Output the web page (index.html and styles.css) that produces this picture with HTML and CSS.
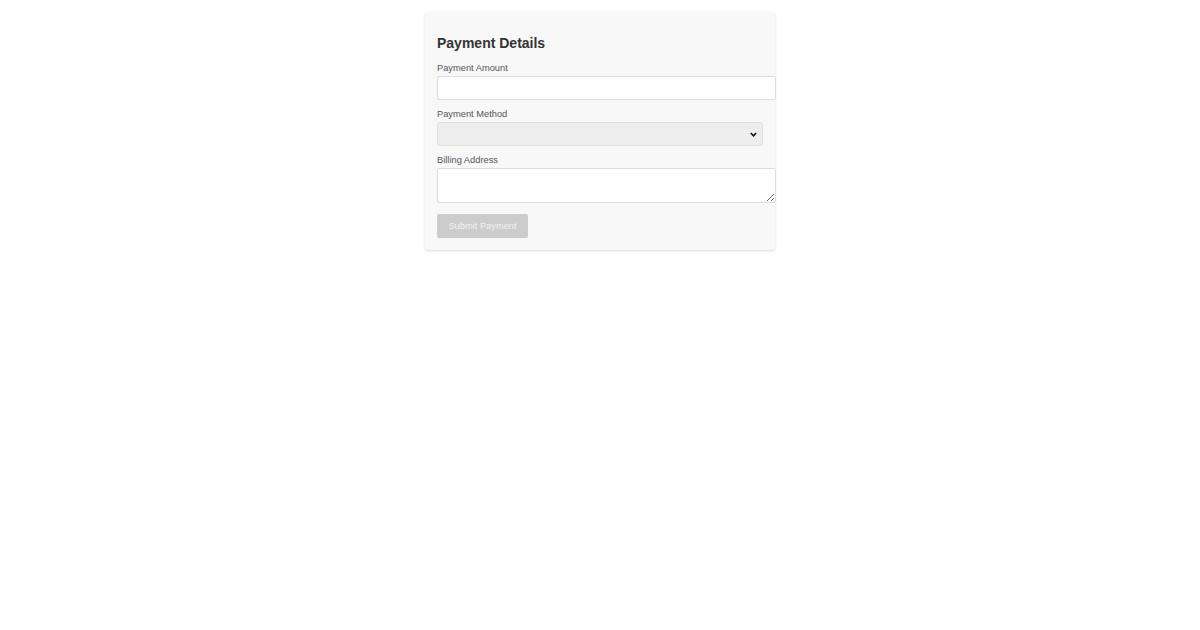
FILE: index.html
```html
<!DOCTYPE html>
<html lang="en">
  <head>
    <meta charset="utf-8" />
    <title>Payment Details</title>
    <link rel="stylesheet" href="styles.css">
  </head>
  <body>
    <div class="payment-card">
      <h2>Payment Details</h2>
      <form>
        <div class="form-group">
          <label for="amount">Payment Amount</label>
          <input type="text" id="amount" class="input-field" />
        </div>
        <div class="form-group">
          <label for="method">Payment Method</label>
          <select id="method" class="select-field"></select>
        </div>
        <div class="form-group">
          <label for="address">Billing Address</label>
          <textarea id="address" class="input-field textarea-field"></textarea>
        </div>
        <button type="submit" class="submit-button" disabled>Submit Payment</button>
      </form>
    </div>
  </body>
</html>
```

FILE: styles.css
```css
body,
html {
  margin: 0;
  padding: 0;
  font-family: "Liberation Sans", Arial, sans-serif;
  color: #333;
  background: #fff;
}

.payment-card {
  width: 350px;
  box-sizing: border-box;
  margin: 12px auto;
  padding: 12px;
  background-color: #f8f8f8;
  border-radius: 4px;
  box-shadow: 0 1px 3px rgba(0, 0, 0, 0.15);
}

h2 {
  font-size: 14px;
  line-height: 18px;
  font-weight: bold;
  margin: 10px 0 11px;
  color: #333;
}

.form-group {
  margin-bottom: 9px;
}

label {
  display: block;
  font-size: 9.3px;
  line-height: 11px;
  color: #555;
  margin-bottom: 2px;
}

.input-field {
  display: block;
  width: 100%;
  height: 12px;
  padding: 5px 5.5px;
  border: 1px solid #ddd;
  border-radius: 2px;
  background: #fff;
  font-family: inherit;
  font-size: 9.3px;
  margin: 0;
}

.textarea-field {
  height: 23px;
}

.select-field {
  display: block;
  width: 100%;
  height: 24px;
  margin: 0;
  border: 1px solid #ddd;
  border-radius: 3px;
  background-color: #eee;
  background-image: url("data:image/svg+xml,%3Csvg xmlns='http://www.w3.org/2000/svg' width='7' height='5' viewBox='0 0 7 5'%3E%3Cpath d='M0.8 1 L3.5 3.8 L6.2 1' fill='none' stroke='%23111' stroke-width='1.6'/%3E%3C/svg%3E");
  background-repeat: no-repeat;
  background-position: right 5px center;
  -webkit-appearance: none;
  appearance: none;
  font-family: inherit;
  font-size: 9.3px;
}

.submit-button {
  display: block;
  width: 91px;
  height: 24px;
  margin-top: 11px;
  padding: 0;
  background-color: #ccc;
  color: #f2f2f2;
  border: none;
  border-radius: 2px;
  font-family: inherit;
  font-size: 9.3px;
}

form .form-group:last-of-type {
  margin-bottom: 0;
}
```
